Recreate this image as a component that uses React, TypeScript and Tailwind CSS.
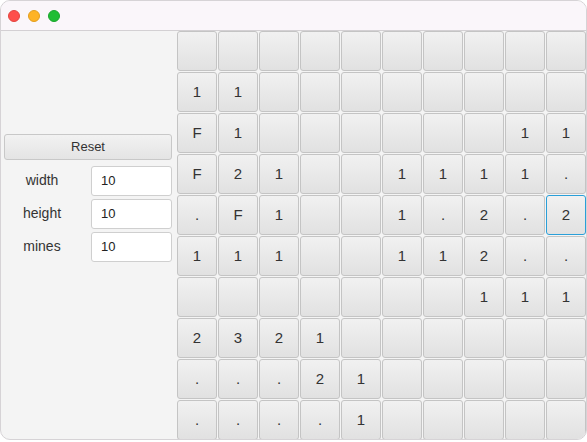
const board: string[][] = [
  ["", "", "", "", "", "", "", "", "", ""],
  ["1", "1", "", "", "", "", "", "", "", ""],
  ["F", "1", "", "", "", "", "", "", "1", "1"],
  ["F", "2", "1", "", "", "1", "1", "1", "1", "."],
  [".", "F", "1", "", "", "1", ".", "2", ".", "2"],
  ["1", "1", "1", "", "", "1", "1", "2", ".", "."],
  ["", "", "", "", "", "", "", "1", "1", "1"],
  ["2", "3", "2", "1", "", "", "", "", "", ""],
  [".", ".", ".", "2", "1", "", "", "", "", ""],
  [".", ".", ".", ".", "1", "", "", "", "", ""],
];

const Field = ({ label }: { label: string }) => (
  <div className="flex items-center h-[33px]">
    <span className="w-[76px] text-center text-[14px] text-[#333]">{label}</span>
    <div className="ml-[11px] w-[81px] h-[30px] bg-white border border-[#cfcfcf] rounded-[3px] flex items-center px-[9px] text-[13px] text-[#222]">
      10
    </div>
  </div>
);

export default function App() {
  return (
    <div className="w-[587px] h-[442px] bg-white overflow-hidden" style={{ fontFamily: '"Liberation Sans", Arial, sans-serif' }}>
      <div className="w-[587px] h-[440px] rounded-[10px] border border-[#d6d3d6] overflow-hidden flex flex-col bg-[#f4f4f4]">
        <div className="h-[30px] shrink-0 bg-[#faf6fa] border-b border-[#d3d0d3] flex items-center gap-[8px] pl-[7px]">
          <span className="w-[12px] h-[12px] rounded-full bg-[#fe4f4b] border border-[#e2443f]" />
          <span className="w-[12px] h-[12px] rounded-full bg-[#feb326] border border-[#e29e1e]" />
          <span className="w-[12px] h-[12px] rounded-full bg-[#1fbd34] border border-[#1aa52c]" />
        </div>
        <div className="flex flex-1">
          <div className="w-[176px] shrink-0 pt-[103px] pl-[3px]">
            <div className="w-[168px] h-[26px] rounded-[3px] border border-[#c8c8c8] bg-gradient-to-b from-[#f2f2f2] to-[#e4e4e4] flex items-center justify-center text-[13px] text-[#333]">
              Reset
            </div>
            <div className="mt-[4px] flex flex-col">
              <Field label="width" />
              <Field label="height" />
              <Field label="mines" />
            </div>
          </div>
          <div className="grid grid-cols-[repeat(10,40px)] grid-rows-[repeat(10,40px)] gap-[1px]">
            {board.flatMap((row, r) =>
              row.map((v, c) => {
                const focused = r === 4 && c === 9;
                return (
                  <div
                    key={`${r}-${c}`}
                    className={`rounded-[3px] bg-gradient-to-b from-[#f1f1f1] to-[#e1e1e1] flex items-center justify-center text-[15px] text-[#333] ${
                      focused ? "border-[1.5px] border-[#2a9fd8]" : "border border-[#c4c4c4]"
                    }`}
                  >
                    {v}
                  </div>
                );
              })
            )}
          </div>
        </div>
      </div>
    </div>
  );
}
